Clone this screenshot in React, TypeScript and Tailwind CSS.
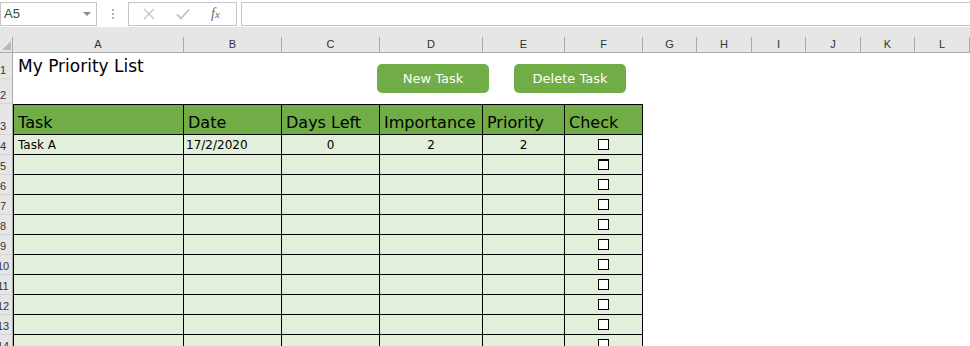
import React from 'react'

const COLS = [
  { letter: 'A', w: 'w-[171px]' },
  { letter: 'B', w: 'w-[98px]' },
  { letter: 'C', w: 'w-[98px]' },
  { letter: 'D', w: 'w-[103px]' },
  { letter: 'E', w: 'w-[82px]' },
  { letter: 'F', w: 'w-[78px]' },
  { letter: 'G', w: 'w-[54px]' },
  { letter: 'H', w: 'w-[55px]' },
  { letter: 'I', w: 'w-[54px]' },
  { letter: 'J', w: 'w-[55px]' },
  { letter: 'K', w: 'w-[54px]' },
  { letter: 'L', w: 'w-[55px]' },
]

const HEADERS = ['Task', 'Date', 'Days Left', 'Importance', 'Priority', 'Check']

const ui = "font-['Liberation_Sans',Arial,sans-serif]"
const hand = "font-['DejaVu_Sans',sans-serif]"

// row numbers are clipped by the narrow header, like in the sheet
function RowHead({ n, h }: { n: number; h: string }) {
  return (
    <div className={`${h} w-[13px] shrink-0 bg-[#e6e6e6] border-r border-b border-r-[#ababab] border-b-[#d4d4d4] overflow-hidden flex items-end pb-[2px]`}>
      <div className={`w-[20px] ml-[-7px] shrink-0 text-center text-[11px] leading-none text-[#333] ${ui}`}>{n}</div>
    </div>
  )
}

function Checkbox({ thickTop }: { thickTop?: boolean }) {
  return (
    <span className={`block w-[11px] h-[11px] bg-white border border-black ${thickTop ? 'border-t-2' : ''}`} />
  )
}

function FormulaBar() {
  return (
    <div className="h-[27px] bg-white flex items-start pt-[2px]">
      <div className="w-[97px] h-[24px] border border-[#c6c6c6] flex items-center justify-between pl-[3px] pr-[5px]">
        <span className={`text-[13px] text-[#2c4f40] ${ui}`}>A5</span>
        <span className="w-0 h-0 border-l-[4px] border-r-[4px] border-t-[4px] border-l-transparent border-r-transparent border-t-[#8a8a8a]" />
      </div>
      <div className="w-[31px] h-[24px] flex flex-col items-center justify-center gap-[2px]">
        <span className="w-[2px] h-[2px] bg-[#b5b5b5]" />
        <span className="w-[2px] h-[2px] bg-[#b5b5b5]" />
        <span className="w-[2px] h-[2px] bg-[#b5b5b5]" />
      </div>
      <div className="w-[109px] h-[24px] border border-[#c6c6c6] flex items-center">
        <svg className="ml-[14px]" width="12" height="12" viewBox="0 0 12 12">
          <path d="M1 1L11 11M11 1L1 11" stroke="#c3c3c3" strokeWidth="1.3" fill="none" />
        </svg>
        <svg className="ml-[21px]" width="14" height="12" viewBox="0 0 14 12">
          <path d="M1 6.5L5 10.5L13 1.5" stroke="#c3c3c3" strokeWidth="1.8" fill="none" />
        </svg>
        <span className="ml-[21px] text-[14px] italic text-[#666] font-['Liberation_Serif',serif] leading-none">
          f<span className="text-[11px]">x</span>
        </span>
      </div>
      <div className="ml-[4px] flex-1 h-[24px] border border-r-0 border-[#c6c6c6]" />
    </div>
  )
}

function ColumnHeader() {
  return (
    <div className="bg-[#e6e6e6]">
      <div className="h-[10px]" />
      <div className="flex h-[16px] border-b border-[#ababab]">
        <div className="w-[13px] shrink-0 border-r border-[#ababab] flex items-end justify-end pr-[1px] pb-[2px]">
          <svg width="9" height="9" viewBox="0 0 9 9">
            <path d="M9 0L9 9L0 9Z" fill="#b8b8b8" />
          </svg>
        </div>
        {COLS.map((c) => (
          <div key={c.letter} className={`${c.w} shrink-0 border-r border-[#ababab] flex items-center justify-center text-[11px] text-[#333] ${ui}`}>
            {c.letter}
          </div>
        ))}
      </div>
    </div>
  )
}

function EmptyCells({ h }: { h: string }) {
  return (
    <>
      {COLS.slice(6).map((c) => (
        <div key={c.letter} className={`${c.w} ${h} shrink-0 bg-white`} />
      ))}
    </>
  )
}

export default function App() {
  const dataRows = [4, 5, 6, 7, 8, 9, 10, 11, 12, 13, 14]

  return (
    <div className="w-[970px] h-[346px] overflow-hidden bg-white relative">
      <FormulaBar />
      <ColumnHeader />

      <div className="relative">
        {/* row 1 */}
        <div className="flex">
          <RowHead n={1} h="h-[26px]" />
          <div className={`w-[171px] h-[26px] shrink-0 pl-[5px] pt-[1px] text-[17px] leading-[24px] text-black whitespace-nowrap ${hand}`}>
            My Priority List
          </div>
          <div className="flex-1 h-[26px]" />
        </div>

        {/* row 2 */}
        <div className="flex">
          <RowHead n={2} h="h-[25px]" />
          <div className="flex-1 h-[25px]" />
        </div>

        {/* row 3: table header */}
        <div className="flex">
          <RowHead n={3} h="h-[31px]" />
          {HEADERS.map((t, i) => (
            <div
              key={t}
              className={`${COLS[i].w} h-[31px] shrink-0 bg-[#70ad47] border-t border-b border-r border-black ${i === 0 ? 'border-l' : ''} flex items-end pl-[4px] text-[16px] leading-[22px] text-black whitespace-nowrap overflow-hidden ${hand}`}
            >
              {t}
            </div>
          ))}
          <EmptyCells h="h-[31px]" />
        </div>

        {/* data rows */}
        {dataRows.map((n) => (
          <div key={n} className="flex">
            <RowHead n={n} h="h-[20px]" />
            <div className={`w-[171px] h-[20px] shrink-0 bg-[#e2efda] border-l border-r border-b border-black flex items-center pl-[4px] text-[12px] ${hand}`}>
              {n === 4 ? 'Task A' : ''}
            </div>
            <div className={`w-[98px] h-[20px] shrink-0 bg-[#e2efda] border-r border-b border-black flex items-center pl-[2px] text-[12px] ${hand}`}>
              {n === 4 ? '17/2/2020' : ''}
            </div>
            <div className={`w-[98px] h-[20px] shrink-0 bg-[#e2efda] border-r border-b border-black flex items-center justify-center text-[12px] ${hand}`}>
              {n === 4 ? '0' : ''}
            </div>
            <div className={`w-[103px] h-[20px] shrink-0 bg-[#e2efda] border-r border-b border-black flex items-center justify-center text-[12px] ${hand}`}>
              {n === 4 ? '2' : ''}
            </div>
            <div className={`w-[82px] h-[20px] shrink-0 bg-[#e2efda] border-r border-b border-black flex items-center justify-center text-[12px] ${hand}`}>
              {n === 4 ? '2' : ''}
            </div>
            <div className="w-[78px] h-[20px] shrink-0 bg-[#e2efda] border-r border-b border-black flex items-center justify-center">
              <Checkbox thickTop={n === 5} />
            </div>
            <EmptyCells h="h-[20px]" />
          </div>
        ))}

        {/* shapes floating over rows 1-2 */}
        <button className={`absolute left-[377px] top-[11px] w-[112px] h-[29px] rounded-[5px] bg-[#70ad47] text-white text-[13px] ${hand}`}>
          New Task
        </button>
        <button className={`absolute left-[514px] top-[11px] w-[112px] h-[29px] rounded-[5px] bg-[#70ad47] text-white text-[13px] ${hand}`}>
          Delete Task
        </button>
      </div>
    </div>
  )
}
